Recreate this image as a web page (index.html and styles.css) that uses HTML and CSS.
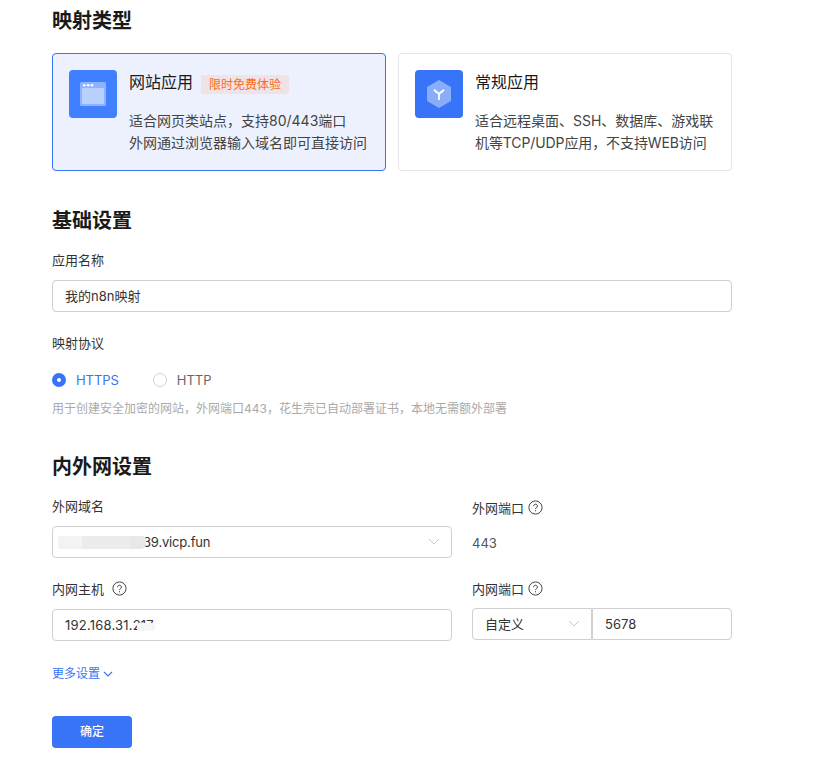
FILE: index.html
```html
<!DOCTYPE html>
<html lang="zh-CN">
<head>
    <meta charset="UTF-8">
    <meta name="viewport" content="width=device-width, initial-scale=1.0">
    <title>映射设置</title>
    <link rel="stylesheet" href="styles.css">
</head>
<body>

    <main>
        <h2>映射类型</h2>
        <section class="types">
            <article class="type selected">
                <svg class="type-icon" viewBox="0 0 48 48">
                    <rect width="48" height="48" rx="4" fill="#4080ff"/>
                    <rect x="11" y="12" width="26" height="24" rx="1.5" fill="#8cb3ff"/>
                    <rect x="13" y="18" width="22" height="16" rx="1" fill="#bad1ff"/>
                    <circle cx="15.3" cy="15.2" r="1.3" fill="#fff"/>
                    <circle cx="19.1" cy="15.2" r="1.3" fill="#fff"/>
                    <circle cx="22.9" cy="15.2" r="1.3" fill="#fff"/>
                </svg>
                <div>
                    <h3>网站应用<span class="tag">限时免费体验</span></h3>
                    <p>适合网页类站点，支持80/443端口<br>外网通过浏览器输入域名即可直接访问</p>
                </div>
            </article>
            <article class="type">
                <svg class="type-icon" viewBox="0 0 48 48">
                    <rect width="48" height="48" rx="4" fill="#3874f7"/>
                    <path d="M24 10l12 7v14l-12 7-12-7V17z" fill="#8aadfa"/>
                    <path d="M19 19.7l5 4.3 5-4.3M24 24v6" fill="none" stroke="#fff" stroke-width="1.8"/>
                </svg>
                <div>
                    <h3>常规应用</h3>
                    <p>适合远程桌面、SSH、数据库、游戏联<br><span class="tight">机等TCP/UDP应用，不支持WEB访问</span></p>
                </div>
            </article>
        </section>

        <h2>基础设置</h2>
        <label class="label" for="name">应用名称</label>
        <input class="box name" id="name" type="text" value="我的n8n映射">

        <div class="label protocol">映射协议</div>
        <div class="radios">
            <label class="radio checked"><span class="dot"></span>HTTPS</label>
            <label class="radio"><span class="dot"></span>HTTP</label>
        </div>
        <p class="hint">用于创建安全加密的网站，外网端口443，花生壳已自动部署证书，本地无需额外部署</p>

        <h2>内外网设置</h2>
        <section class="network">
            <div class="left">
                <div class="label">外网域名</div>
                <div class="box select domain">
                    <span class="domain-text">39.vicp.fun</span>
                    <span class="mask"></span>
                    <svg class="arrow" viewBox="0 0 12 8"><path d="M1 1l5 5 5-5"/></svg>
                </div>
                <div class="label second">内网主机
                    <svg class="help wide" viewBox="0 0 15 15"><circle cx="7.5" cy="7.5" r="6.6"/><path d="M5.6 6.1a1.9 1.9 0 1 1 2.9 1.6c-.7.4-1 .7-1 1.4M7.5 10.2v1.1"/></svg>
                </div>
                <div class="box host">192.168.31.217<span class="mask"></span></div>
            </div>
            <div class="right">
                <div class="label">外网端口
                    <svg class="help" viewBox="0 0 15 15"><circle cx="7.5" cy="7.5" r="6.6"/><path d="M5.6 6.1a1.9 1.9 0 1 1 2.9 1.6c-.7.4-1 .7-1 1.4M7.5 10.2v1.1"/></svg>
                </div>
                <div class="port">443</div>
                <div class="label">内网端口
                    <svg class="help" viewBox="0 0 15 15"><circle cx="7.5" cy="7.5" r="6.6"/><path d="M5.6 6.1a1.9 1.9 0 1 1 2.9 1.6c-.7.4-1 .7-1 1.4M7.5 10.2v1.1"/></svg>
                </div>
                <div class="group">
                    <div class="box select">自定义
                        <svg class="arrow" viewBox="0 0 12 8"><path d="M1 1l5 5 5-5"/></svg>
                    </div>
                    <input class="box" type="text" value="5678">
                </div>
            </div>
        </section>

        <a class="more">更多设置
            <svg viewBox="0 0 10 8"><path d="M1 2l4 4 4-4"/></svg>
        </a>
        <button class="submit">确定</button>
    </main>

</body>
</html>
```

FILE: styles.css
```css
* {
    box-sizing: border-box;
}

body {
    margin: 0;
    background-color: #fff;
    color: #333;
    font-family: Inter, "Noto Sans CJK SC", sans-serif;
    font-size: 13px;
    line-height: 20px;
}

main {
    width: 680px;
    margin-left: 52px;
    padding-top: 7px;
}

h2, h3, p {
    margin: 0;
}

h2 {
    color: #1a1a1a;
    font-size: 20px;
    line-height: 28px;
    font-weight: 700;
}

.types {
    display: grid;
    grid-template-columns: 1fr 1fr;
    gap: 12px;
    margin: 18px 0 36px;
}

.type {
    display: flex;
    gap: 12px;
    height: 118px;
    padding: 16px;
    border: 1px solid #e6e6e6;
    border-radius: 4px;
    white-space: nowrap;
}

.selected {
    border-color: #3874f7;
    background-color: #edf1fe;
}

.type-icon {
    flex: none;
    width: 48px;
    height: 48px;
}

h3 {
    display: flex;
    align-items: center;
    height: 24px;
    color: #1a1a1a;
    font-size: 16px;
    font-weight: 400;
}

.tag {
    height: 19px;
    margin: 5px 0 0 8px;
    padding: 0 8px;
    border-radius: 2px;
    background-color: #efe3e8;
    color: #ff6a13;
    font-size: 12px;
    line-height: 19px;
}

.type p {
    margin-top: 16px;
    color: #444;
    font-size: 14px;
    line-height: 22px;
}

.tight {
    letter-spacing: -0.1px;
}

.label {
    display: flex;
    align-items: center;
    height: 20px;
    margin: 15px 0 10px;
}

.box {
    position: relative;
    display: flex;
    align-items: center;
    width: 100%;
    height: 32px;
    padding: 0 12px;
    border: 1px solid #d0d0d0;
    border-radius: 4px;
    background-color: #fff;
    color: #333;
    font: inherit;
    outline: none;
}

.name {
    padding-bottom: 2px;
}

.protocol {
    margin: 21px 0 17px;
}

.radios {
    display: flex;
    gap: 34px;
}

.radio {
    display: flex;
    align-items: center;
    gap: 10px;
    color: #666;
    letter-spacing: -0.05px;
}

.dot {
    width: 14px;
    height: 14px;
    border: 1px solid #d0d0d0;
    border-radius: 50%;
}

.checked {
    color: #3874f7;
}

.checked .dot {
    border: 5px solid #3874f7;
}

.hint {
    margin: 10px 0 35px;
    color: #aaa;
    font-size: 12px;
    line-height: 18px;
}

.network {
    display: grid;
    grid-template-columns: 400px 260px;
    gap: 20px;
}

.left .second {
    margin-top: 21px;
}

.right .label:first-child {
    margin-top: 17px;
}

.help {
    width: 15px;
    height: 15px;
    margin: -1px 0 0 4px;
    fill: none;
    stroke: #444;
}

.help.wide {
    margin-left: 8px;
}

.select {
    justify-content: space-between;
    padding-right: 11px;
}

.arrow {
    width: 12px;
    height: 8px;
    fill: none;
    stroke: #c8c8cc;
}

.domain-text {
    margin-left: 78px;
    letter-spacing: -0.18px;
}

/* grey strips over the private part of the address */
.mask {
    position: absolute;
    left: 5px;
    top: 9px;
    width: 88px;
    height: 13px;
    border-radius: 3px 4px 5px 3px;
    background: linear-gradient(to right, #f3f3f3 24px, #ececec 24px, #ececec 72px, #e8e8e8 72px);
}

.host {
    letter-spacing: 0.2px;
}

.host .mask {
    left: 84px;
    top: 13px;
    width: 18px;
    height: 8px;
    border-radius: 2px;
    background: #f6f6f6;
}

.port {
    height: 20px;
    margin: 15px 0 26px;
    color: #555;
}

.right .port + .label {
    margin-bottom: 9px;
}

.group {
    display: grid;
    grid-template-columns: 120px 1fr;
}

.group .select {
    border-radius: 4px 0 0 4px;
}

.group input {
    border-radius: 0 4px 4px 0;
}

.more {
    display: flex;
    align-items: center;
    gap: 3px;
    width: max-content;
    height: 18px;
    margin-top: 24px;
    color: #3874f7;
    font-size: 12px;
}

.more svg {
    width: 10px;
    height: 8px;
    fill: none;
    stroke: #3874f7;
    stroke-width: 1.2;
}

.submit {
    display: block;
    width: 80px;
    height: 32px;
    margin-top: 33px;
    padding: 0;
    border: 0;
    border-radius: 4px;
    background-color: #3874f7;
    color: #fff;
    font: inherit;
    font-size: 12px;
    font-weight: 500;
}
```
